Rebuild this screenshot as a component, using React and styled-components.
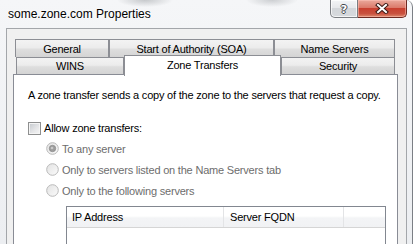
import React from "react";
import styled, { createGlobalStyle } from "styled-components";

const GlobalStyle = createGlobalStyle`
  html, body { margin: 0; padding: 0; background: #fff; }
  * { box-sizing: border-box; }
`;

const Window = styled.div`
  width: 413px;
  height: 244px;
  overflow: hidden;
  display: flex;
  flex-direction: column;
  border-right: 1px solid #7b7f85;
  border-top-right-radius: 7px;
  background:
    radial-gradient(ellipse 28px 7px at 145px 0px, rgba(110, 115, 120, 0.35), transparent),
    radial-gradient(ellipse 26px 7px at 272px 0px, rgba(110, 115, 120, 0.3), transparent),
    linear-gradient(#f5f6f8, #eceef1);
  font-family: "Liberation Sans", Arial, sans-serif;
  font-size: 11px;
  letter-spacing: -0.2px;
  color: #000;
`;

const TitleBar = styled.div`
  height: 28px;
  flex-shrink: 0;
  display: flex;
  justify-content: space-between;
  align-items: flex-start;
`;

const Title = styled.div`
  margin: 7px 0 0 8px;
  font-size: 12px;
  line-height: 14px;
  letter-spacing: 0;
  text-shadow: 0 0 5px #fff, 0 0 3px #fff;
`;

const CaptionButtons = styled.div`
  display: flex;
  margin-right: 5px;
`;

const CaptionButton = styled.div`
  width: ${(p) => p.$w}px;
  height: 18px;
  display: flex;
  align-items: center;
  justify-content: center;
  border: 1px solid ${(p) => (p.$close ? "#6e2a22" : "#7a7d82")};
  border-top: none;
  border-radius: ${(p) => (p.$close ? "0 0 5px 0" : "0 0 0 5px")};
  background: ${(p) =>
    p.$close
      ? "linear-gradient(#eaa99c 0%, #db7a6a 45%, #c8402f 50%, #c9513f 80%, #dd8a6e 100%)"
      : "linear-gradient(#f3f4f6 0%, #e6e8eb 45%, #d3d6da 50%, #d6d9dd 100%)"};
  box-shadow: inset 0 0 0 1px ${(p) => (p.$close ? "rgba(255,200,190,0.5)" : "rgba(255,255,255,0.7)")};
  & + & { border-left: none; }
`;

const HelpGlyph = styled.span`
  font-family: "DejaVu Sans", sans-serif;
  font-weight: bold;
  font-size: 11px;
  line-height: 1;
  letter-spacing: 0;
  color: #fff;
  text-shadow: 1px 0 #44474c, -1px 0 #44474c, 0 1px #44474c, 0 -1px #44474c;
  margin-top: 1px;
`;

const Client = styled.div`
  flex: 1;
  margin: 0 5px 0 6px;
  border: 1px solid #a3a6aa;
  background: #f0f0f0;
  padding-top: 10px;
  display: flex;
  flex-direction: column;
`;

const TabStrip = styled.div`
  display: flex;
  flex-direction: column;
  padding-left: 8px;
  position: relative;
  z-index: 1;
`;

const TabRow = styled.div`
  display: flex;
  align-items: flex-start;
  height: ${(p) => p.$h}px;
  margin-left: ${(p) => p.$offset}px;
`;

const Tab = styled.div`
  width: ${(p) => p.$w}px;
  height: 100%;
  display: flex;
  align-items: center;
  justify-content: center;
  border: 1px solid #8c8e94;
  border-bottom: none;
  background: linear-gradient(#f3f3f3 0%, #ececec 45%, #dedede 55%, #d4d4d4 100%);
  white-space: nowrap;
`;

const ActiveTab = styled(Tab)`
  height: 21px;
  margin-top: -2px;
  padding-bottom: 2px;
  background: #fff;
`;

const Panel = styled.div`
  margin-left: 6px;
  width: 385px;
  height: 200px;
  flex-shrink: 0;
  background: #fff;
  border: 1px solid #898c95;
  padding: 12px 14px 0;
`;

const Description = styled.div`
  line-height: 16px;
  white-space: nowrap;
`;

const CheckRow = styled.label`
  margin-top: 17px;
  height: 16px;
  display: flex;
  align-items: center;
  gap: 3px;
`;

const CheckBox = styled.span`
  width: 13px;
  height: 13px;
  border: 1px solid #8e8f8f;
  background: linear-gradient(135deg, #c4c8cd 0%, #e4e5e7 55%, #f6f6f6 100%);
  box-shadow: inset 0 0 0 1px #f4f4f4;
`;

const RadioGroup = styled.div`
  margin: 2px 0 0 18px;
  display: flex;
  flex-direction: column;
`;

const RadioRow = styled.div`
  height: 21px;
  display: flex;
  align-items: center;
  gap: 3px;
  color: #6d6d6d;
`;

const ListBox = styled.div`
  margin: 5px 0 0 38px;
  width: 320px;
  height: 60px;
  border: 1px solid #828790;
`;

const ListHeader = styled.div`
  display: flex;
  height: 21px;
  border-bottom: 1px solid #d5d5d5;
  background: linear-gradient(#ffffff 0%, #ffffff 45%, #f3f4f6 55%, #f1f2f4 100%);
`;

const HeaderCell = styled.div`
  width: ${(p) => p.$w}px;
  display: flex;
  align-items: center;
  padding-left: ${(p) => p.$pad}px;
  border-right: 1px solid #e3e4e6;
`;

function Radio({ checked }) {
  return (
    <svg width="13" height="13" viewBox="0 0 13 13">
      <defs>
        <linearGradient id={checked ? "rgc" : "rg"} x1="0" y1="0" x2="1" y2="1">
          <stop offset="0" stopColor="#e2e2e2" />
          <stop offset="1" stopColor="#fbfbfb" />
        </linearGradient>
      </defs>
      <circle cx="6.5" cy="6.5" r="5.8" fill={`url(#${checked ? "rgc" : "rg"})`} stroke="#b9b9b9" strokeWidth="1" />
      {checked && (
        <>
          <circle cx="6.5" cy="6.5" r="3.2" fill="#9d9d9d" stroke="#8c8c8c" strokeWidth="0.8" />
          <circle cx="6" cy="6" r="1.3" fill="#c9c9c9" />
        </>
      )}
    </svg>
  );
}

function CloseGlyph() {
  return (
    <svg width="14" height="11" viewBox="0 0 14 11">
      <path d="M3 2 L11 9 M11 2 L3 9" stroke="#3d1a15" strokeWidth="4" strokeLinecap="square" />
      <path d="M3 2 L11 9 M11 2 L3 9" stroke="#fff" strokeWidth="2" strokeLinecap="square" />
    </svg>
  );
}

export default function App() {
  return (
    <>
      <GlobalStyle />
      <Window>
        <TitleBar>
          <Title>some.zone.com Properties</Title>
          <CaptionButtons>
            <CaptionButton $w={28}>
              <HelpGlyph>?</HelpGlyph>
            </CaptionButton>
            <CaptionButton $w={49} $close>
              <CloseGlyph />
            </CaptionButton>
          </CaptionButtons>
        </TitleBar>
        <Client>
          <TabStrip>
            <TabRow $h={18} $offset={0}>
              <Tab $w={94}>General</Tab>
              <Tab $w={165}>Start of Authority (SOA)</Tab>
              <Tab $w={121}>Name Servers</Tab>
            </TabRow>
            <TabRow $h={17} $offset={1}>
              <Tab $w={108}>WINS</Tab>
              <ActiveTab $w={157}>Zone Transfers</ActiveTab>
              <Tab $w={114}>Security</Tab>
            </TabRow>
          </TabStrip>
          <Panel>
            <Description>
              A zone transfer sends a copy of the zone to the servers that request a copy.
            </Description>
            <CheckRow>
              <CheckBox />
              Allow zone transfers:
            </CheckRow>
            <RadioGroup>
              <RadioRow>
                <Radio checked />
                To any server
              </RadioRow>
              <RadioRow>
                <Radio />
                Only to servers listed on the Name Servers tab
              </RadioRow>
              <RadioRow>
                <Radio />
                Only to the following servers
              </RadioRow>
            </RadioGroup>
            <ListBox>
              <ListHeader>
                <HeaderCell $w={157} $pad={5}>IP Address</HeaderCell>
                <HeaderCell $w={120} $pad={6}>Server FQDN</HeaderCell>
              </ListHeader>
            </ListBox>
          </Panel>
        </Client>
      </Window>
    </>
  );
}
